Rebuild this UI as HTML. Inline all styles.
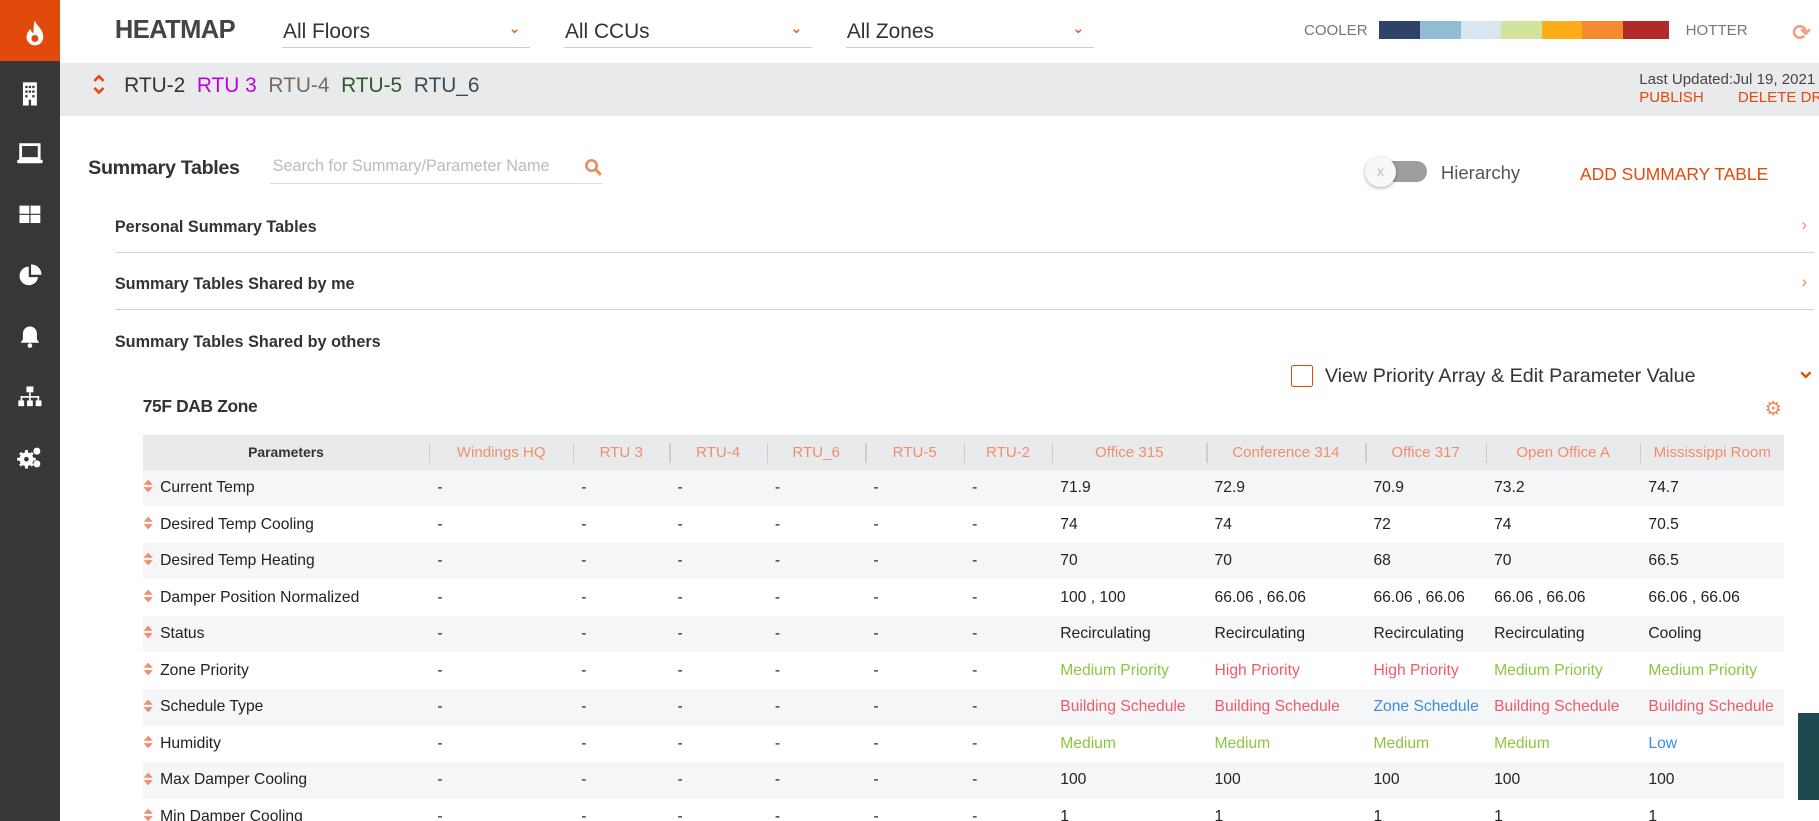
<!DOCTYPE html>
<html><head><meta charset="utf-8"><style>
*{margin:0;padding:0;box-sizing:border-box}
html,body{width:1819px;height:821px;overflow:hidden;background:#fff}
#w{zoom:1.1601;width:1568px;height:708px;position:relative;font-family:"Liberation Sans",sans-serif;color:#333;overflow:hidden}
.a{position:absolute;white-space:nowrap}
.sb{left:0;top:0;width:52px;height:708px;background:#373737}
.ic{position:absolute;left:14px;width:24px;height:24px}
.dd{position:absolute;top:16px;height:25px;border-bottom:1px solid #ccc;font-size:18px;color:#333;padding-left:1px;line-height:22px}
.dd span{position:absolute;right:8px;top:-2px;color:#e24a0c;font-size:13px}
.sec{left:99px;width:1465px;font-size:14px;font-weight:bold;color:#333}
.hr{position:absolute;left:99px;width:1465px;height:1px;background:#d0d0d0}
table{position:absolute;left:123px;top:375px;border-collapse:collapse;font-size:13.5px;table-layout:fixed;width:1415px}
th{height:30px;background:#e9eaec;color:#ef8e6e;font-weight:normal;font-size:13px;text-align:center;position:relative}
th.p{color:#333;font-weight:bold;font-size:12px}
th:not(.p)::before{content:"";position:absolute;left:0;top:7px;height:17px;width:1px;background:#ccc}
td{height:31.5px;padding-left:7px;color:#222}
tr:nth-child(even) td{background:#f5f6f8}
td.n{padding-left:0}
td.n svg{margin-right:6px;vertical-align:-1px}
.g{color:#8cc63f}.r{color:#ef5a6a}.b{color:#3b8de0}
</style></head><body><div id="w">
<div class="a sb"></div>
<div class="a" style="left:0;top:0;width:52px;height:53px;background:#e24a0c"></div>
<svg class="ic" style="top:16px;left:18px" width="16" height="20" viewBox="0 0 16 20"><path d="M8 1C9 5 14 7 14 13a6 6 0 0 1-12 0c0-3 2-5 3-6 0 2 1 3 2 3C7 7 7 4 8 1z" fill="#fff"/><circle cx="8" cy="14" r="2.5" fill="#e24a0c"/></svg>
<svg class="ic" style="top:69px" viewBox="0 0 24 24"><rect x="6" y="2" width="12" height="20" fill="#fff"/><g fill="#373737"><rect x="8" y="5" width="2" height="2"/><rect x="11" y="5" width="2" height="2"/><rect x="14" y="5" width="2" height="2"/><rect x="8" y="9" width="2" height="2"/><rect x="11" y="9" width="2" height="2"/><rect x="14" y="9" width="2" height="2"/><rect x="8" y="13" width="2" height="2"/><rect x="14" y="13" width="2" height="2"/><rect x="11" y="17" width="2" height="5"/></g></svg>
<svg class="ic" style="top:121px" viewBox="0 0 24 24"><rect x="4" y="4" width="16" height="12" fill="none" stroke="#fff" stroke-width="2.4"/><rect x="1" y="17" width="22" height="3" rx="1" fill="#fff"/></svg>
<svg class="ic" style="top:173px" viewBox="0 0 24 24"><g fill="#fff"><rect x="3" y="4" width="8.5" height="7"/><rect x="12.5" y="4" width="8.5" height="7"/><rect x="3" y="12" width="8.5" height="7"/><rect x="12.5" y="12" width="8.5" height="7"/></g></svg>
<svg class="ic" style="top:226px" viewBox="0 0 24 24"><path d="M11 4a8 8 0 1 0 8 9h-8z" fill="#fff"/><path d="M13 2v9h9a9 9 0 0 0-9-9z" fill="#fff"/></svg>
<svg class="ic" style="top:278px" viewBox="0 0 24 24"><path d="M12 3a6 6 0 0 0-6 6v5l-2 3h16l-2-3V9a6 6 0 0 0-6-6z" fill="#fff"/><circle cx="12" cy="19.5" r="2" fill="#fff"/></svg>
<svg class="ic" style="top:330px" viewBox="0 0 24 24"><g fill="#fff"><rect x="9" y="3" width="6" height="5"/><rect x="11.3" y="8" width="1.4" height="4"/><rect x="4" y="11.3" width="16" height="1.4"/><rect x="4" y="11.3" width="1.4" height="4"/><rect x="18.6" y="11.3" width="1.4" height="4"/><rect x="2" y="15" width="5" height="5"/><rect x="9.5" y="15" width="5" height="5"/><rect x="17" y="15" width="5" height="5"/><rect x="11.3" y="12" width="1.4" height="3"/></g></svg>
<svg class="ic" style="top:382px" viewBox="0 0 24 24"><g fill="#fff"><circle cx="9" cy="14" r="6"/><circle cx="18" cy="7" r="3"/><circle cx="18" cy="18" r="3"/></g><g stroke="#fff" stroke-width="2.5"><path d="M9 6v16M1 14h16M3.5 8.5l11 11M14.5 8.5l-11 11"/></g><circle cx="9" cy="14" r="2" fill="#373737"/></svg>

<div class="a" style="left:99px;top:14px;font-size:22px;font-weight:bold;color:#444;letter-spacing:-0.5px">HEATMAP</div>
<div class="dd" style="left:243px;width:214px">All Floors<span>&#8964;</span></div>
<div class="dd" style="left:486px;width:214px">All CCUs<span>&#8964;</span></div>
<div class="dd" style="left:729px;width:214px">All Zones<span>&#8964;</span></div>
<div class="a" style="left:1124px;top:19px;font-size:13px;color:#777">COOLER</div>
<div class="a" style="left:1189px;top:18px;display:flex;height:16px">
<div style="width:35px;background:#2f436a"></div><div style="width:35px;background:#90bcd4"></div><div style="width:35px;background:#d8e6f2"></div><div style="width:35px;background:#d2e39b"></div><div style="width:35px;background:#fcae1a"></div><div style="width:35px;background:#f68a2f"></div><div style="width:40px;background:#b22a27"></div></div>
<div class="a" style="left:1453px;top:19px;font-size:13px;color:#777">HOTTER</div>
<div class="a" style="left:1545px;top:17px;font-size:19px;color:#f4a080;font-weight:bold">&#10227;</div>

<div class="a" style="left:52px;top:54px;width:1516px;height:46px;background:#e9eaec"></div>
<svg class="a" style="left:79px;top:64px" width="12" height="18" viewBox="0 0 12 18"><path d="M2 6l4-4 4 4M2 12l4 4 4-4" fill="none" stroke="#e24a0c" stroke-width="2.2"/></svg>
<div class="a" style="left:107px;top:64px;font-size:18px"><span style="color:#333">RTU-2</span>&nbsp; <span style="color:#c000e0">RTU 3</span>&nbsp; <span style="color:#7a6a5a">RTU-4</span>&nbsp; <span style="color:#2d5a2d">RTU-5</span>&nbsp; <span style="color:#3a4a5a">RTU_6</span></div>
<div class="a" style="left:1413px;top:61px;font-size:13px;color:#444">Last Updated:Jul 19, 2021</div>
<div class="a" style="left:1413px;top:77px;font-size:13px;color:#e24a0c">PUBLISH</div>
<div class="a" style="left:1498px;top:77px;font-size:13px;color:#e24a0c">DELETE DRAFT</div>

<div class="a" style="left:76px;top:135px;font-size:17px;font-weight:bold;color:#333;letter-spacing:-0.3px">Summary Tables</div>
<div class="a" style="left:233px;top:135px;width:287px;height:24px;border-bottom:1px solid #ddd;font-size:14px;color:#bbb;padding-left:2px">Search for Summary/Parameter Name</div>
<svg class="a" style="left:503px;top:136px" width="16" height="16" viewBox="0 0 16 16"><circle cx="6.5" cy="6.5" r="4.5" fill="none" stroke="#f08a5d" stroke-width="2.2"/><path d="M10 10l4.5 4.5" stroke="#f08a5d" stroke-width="2.5"/></svg>
<div class="a" style="left:1180px;top:139px;width:50px;height:18px;border-radius:9px;background:#9e9e9e"></div>
<div class="a" style="left:1177px;top:135px;width:26px;height:26px;border-radius:13px;background:#f8f8f8;box-shadow:0 1px 3px rgba(0,0,0,.35);font-size:12px;color:#bbb;text-align:center;line-height:25px">x</div>
<div class="a" style="left:1242px;top:140px;font-size:16px;color:#555">Hierarchy</div>
<div class="a" style="left:1362px;top:141px;font-size:15px;color:#e24a0c">ADD SUMMARY TABLE</div>

<div class="a sec" style="top:188px">Personal Summary Tables</div>
<div class="a" style="left:1553px;top:186px;color:#f08a5d;font-size:14px">&#8250;</div>
<div class="hr" style="top:217px"></div>
<div class="a sec" style="top:237px">Summary Tables Shared by me</div>
<div class="a" style="left:1553px;top:235px;color:#f08a5d;font-size:14px">&#8250;</div>
<div class="hr" style="top:266px"></div>
<div class="a sec" style="top:287px">Summary Tables Shared by others</div>
<div class="a" style="left:1113px;top:315px;width:19px;height:19px;border:1.5px solid #e24a0c;border-radius:2px"></div>
<div class="a" style="left:1142px;top:315px;font-size:17px;color:#333">View Priority Array &amp; Edit Parameter Value</div>
<svg class="a" style="left:1552px;top:319px" width="10" height="8" viewBox="0 0 10 8"><path d="M1 2l4 4 4-4" fill="none" stroke="#e24a0c" stroke-width="2"/></svg>

<div class="a" style="left:123px;top:341px;font-size:15px;font-weight:bold;color:#333;letter-spacing:-0.3px">75F DAB Zone</div>
<div class="a" style="left:1521px;top:342px;color:#f08a5d;font-size:17px">&#9881;</div>

<table>
<colgroup><col style="width:247px"><col style="width:124px"><col style="width:83px"><col style="width:84px"><col style="width:85px"><col style="width:85px"><col style="width:76px"><col style="width:133px"><col style="width:137px"><col style="width:104px"><col style="width:133px"><col style="width:124px"></colgroup>
<tr><th class="p">Parameters</th><th>Windings HQ</th><th>RTU 3</th><th>RTU-4</th><th>RTU_6</th><th>RTU-5</th><th>RTU-2</th><th>Office 315</th><th>Conference 314</th><th>Office 317</th><th>Open Office A</th><th>Mississippi Room</th></tr>
<tr><td class="n"><svg width="9" height="12"><path d="M0.5 5L4.5 0.5 8.5 5zM0.5 7L4.5 11.5 8.5 7z" fill="#ef8e6e"/></svg>Current Temp</td><td>-</td><td>-</td><td>-</td><td>-</td><td>-</td><td>-</td><td>71.9</td><td>72.9</td><td>70.9</td><td>73.2</td><td>74.7</td></tr>
<tr><td class="n"><svg width="9" height="12"><path d="M0.5 5L4.5 0.5 8.5 5zM0.5 7L4.5 11.5 8.5 7z" fill="#ef8e6e"/></svg>Desired Temp Cooling</td><td>-</td><td>-</td><td>-</td><td>-</td><td>-</td><td>-</td><td>74</td><td>74</td><td>72</td><td>74</td><td>70.5</td></tr>
<tr><td class="n"><svg width="9" height="12"><path d="M0.5 5L4.5 0.5 8.5 5zM0.5 7L4.5 11.5 8.5 7z" fill="#ef8e6e"/></svg>Desired Temp Heating</td><td>-</td><td>-</td><td>-</td><td>-</td><td>-</td><td>-</td><td>70</td><td>70</td><td>68</td><td>70</td><td>66.5</td></tr>
<tr><td class="n"><svg width="9" height="12"><path d="M0.5 5L4.5 0.5 8.5 5zM0.5 7L4.5 11.5 8.5 7z" fill="#ef8e6e"/></svg>Damper Position Normalized</td><td>-</td><td>-</td><td>-</td><td>-</td><td>-</td><td>-</td><td>100 , 100</td><td>66.06 , 66.06</td><td>66.06 , 66.06</td><td>66.06 , 66.06</td><td>66.06 , 66.06</td></tr>
<tr><td class="n"><svg width="9" height="12"><path d="M0.5 5L4.5 0.5 8.5 5zM0.5 7L4.5 11.5 8.5 7z" fill="#ef8e6e"/></svg>Status</td><td>-</td><td>-</td><td>-</td><td>-</td><td>-</td><td>-</td><td>Recirculating</td><td>Recirculating</td><td>Recirculating</td><td>Recirculating</td><td>Cooling</td></tr>
<tr><td class="n"><svg width="9" height="12"><path d="M0.5 5L4.5 0.5 8.5 5zM0.5 7L4.5 11.5 8.5 7z" fill="#ef8e6e"/></svg>Zone Priority</td><td>-</td><td>-</td><td>-</td><td>-</td><td>-</td><td>-</td><td class="g">Medium Priority</td><td class="r">High Priority</td><td class="r">High Priority</td><td class="g">Medium Priority</td><td class="g">Medium Priority</td></tr>
<tr><td class="n"><svg width="9" height="12"><path d="M0.5 5L4.5 0.5 8.5 5zM0.5 7L4.5 11.5 8.5 7z" fill="#ef8e6e"/></svg>Schedule Type</td><td>-</td><td>-</td><td>-</td><td>-</td><td>-</td><td>-</td><td class="r">Building Schedule</td><td class="r">Building Schedule</td><td class="b">Zone Schedule</td><td class="r">Building Schedule</td><td class="r">Building Schedule</td></tr>
<tr><td class="n"><svg width="9" height="12"><path d="M0.5 5L4.5 0.5 8.5 5zM0.5 7L4.5 11.5 8.5 7z" fill="#ef8e6e"/></svg>Humidity</td><td>-</td><td>-</td><td>-</td><td>-</td><td>-</td><td>-</td><td class="g">Medium</td><td class="g">Medium</td><td class="g">Medium</td><td class="g">Medium</td><td class="b">Low</td></tr>
<tr><td class="n"><svg width="9" height="12"><path d="M0.5 5L4.5 0.5 8.5 5zM0.5 7L4.5 11.5 8.5 7z" fill="#ef8e6e"/></svg>Max Damper Cooling</td><td>-</td><td>-</td><td>-</td><td>-</td><td>-</td><td>-</td><td>100</td><td>100</td><td>100</td><td>100</td><td>100</td></tr>
<tr><td class="n"><svg width="9" height="12"><path d="M0.5 5L4.5 0.5 8.5 5zM0.5 7L4.5 11.5 8.5 7z" fill="#ef8e6e"/></svg>Min Damper Cooling</td><td>-</td><td>-</td><td>-</td><td>-</td><td>-</td><td>-</td><td>1</td><td>1</td><td>1</td><td>1</td><td>1</td></tr>
</table>
<div class="a" style="left:1550px;top:615px;width:18px;height:75px;background:#1e4a4f"></div>
</div></body></html>
